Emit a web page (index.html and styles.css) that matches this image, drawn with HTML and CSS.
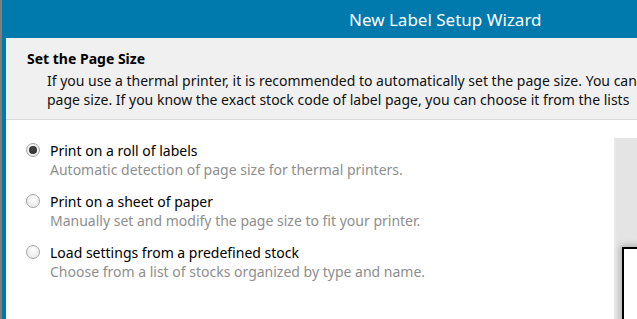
FILE: index.html
```html
<!DOCTYPE html>
<html>
<head>
<meta charset="utf-8">
<link rel="stylesheet" href="styles.css">
</head>
<body>
<div class="window">
  <div class="frame">
    <div class="titlebar"><span class="title">New Label Setup Wizard</span></div>
    <div class="header">
      <div class="heading">Set the Page Size</div>
      <div class="desc">If you use a thermal printer, it is recommended to automatically set the page size. You can<br>page size. If you know the exact stock code of label page, you can choose it from the lists</div>
    </div>
    <div class="content">
      <div class="options">
        <div class="option">
          <span class="radio checked"></span>
          <div class="texts">
            <div class="label">Print on a roll of labels</div>
            <div class="sub">Automatic detection of page size for thermal printers.</div>
          </div>
        </div>
        <div class="option">
          <span class="radio"></span>
          <div class="texts">
            <div class="label">Print on a sheet of paper</div>
            <div class="sub">Manually set and modify the page size to fit your printer.</div>
          </div>
        </div>
        <div class="option">
          <span class="radio"></span>
          <div class="texts">
            <div class="label">Load settings from a predefined stock</div>
            <div class="sub">Choose from a list of stocks organized by type and name.</div>
          </div>
        </div>
      </div>
      <div class="preview">
        <div class="page"></div>
      </div>
    </div>
  </div>
</div>
</body>
</html>
```
FILE: styles.css
```css
html, body {
  margin: 0;
  padding: 0;
  background: #ffffff;
  overflow: hidden;
}
.window {
  width: 637px;
  height: 319px;
  border-left: 2px solid #7d7d7d;
  box-sizing: border-box;
  overflow: hidden;
  font-family: "Noto Sans", "Open Sans", sans-serif;
}
.frame {
  height: 100%;
  border-left: 4px solid #007aad;
  display: flex;
  flex-direction: column;
}
.titlebar {
  height: 38px;
  flex-shrink: 0;
  background: #007aad;
  display: flex;
  align-items: center;
  padding-left: 343px;
  box-sizing: border-box;
}
.title {
  color: #ffffff;
  font-size: 17px;
  white-space: nowrap;
}
.header {
  height: 82px;
  flex-shrink: 0;
  box-sizing: border-box;
  background: #f0f0f0;
  border-bottom: 1px solid #d9d9d9;
  padding: 11px 0 0 21px;
  white-space: nowrap;
}
.heading {
  font-weight: bold;
  font-size: 14px;
  color: #000;
  line-height: 20px;
}
.desc {
  padding-left: 20px;
  font-size: 14px;
  color: #111;
  line-height: 19px;
  margin-top: 2px;
}
.content {
  flex: 1;
  display: grid;
  grid-template-columns: 608px 200px;
  background: #ffffff;
}
.options {
  padding: 21px 0 0 20px;
  display: flex;
  flex-direction: column;
  gap: 12px;
}
.option {
  display: flex;
  align-items: flex-start;
  gap: 10px;
}
.radio {
  width: 14px;
  height: 14px;
  box-sizing: border-box;
  border-radius: 50%;
  border: 1px solid #a4a4a4;
  background: radial-gradient(circle at 50% 35%, #fdfdfd 0%, #e4e4e4 100%);
  margin-top: 2px;
  flex-shrink: 0;
  display: flex;
  align-items: center;
  justify-content: center;
}
.radio.checked::after {
  content: "";
  width: 8px;
  height: 8px;
  border-radius: 50%;
  background: radial-gradient(circle at 50% 40%, #444 0%, #2a2a2a 100%);
}
.texts {
  white-space: nowrap;
}
.label {
  font-size: 14px;
  color: #000;
  line-height: 19px;
}
.sub {
  font-size: 14px;
  color: #8e8e8e;
  line-height: 20px;
}
.preview {
  margin-top: 18px;
  background: linear-gradient(to right, #ececec 0px, #e4e4e4 3px, #e4e4e4 100%);
  padding: 109px 0 0 8px;
}
.page {
  height: 200px;
  border: 2px solid #000;
  border-right: none;
  background: #ffffff;
  box-shadow: 0 0 6px 2px rgba(0, 0, 0, 0.22);
}
```
